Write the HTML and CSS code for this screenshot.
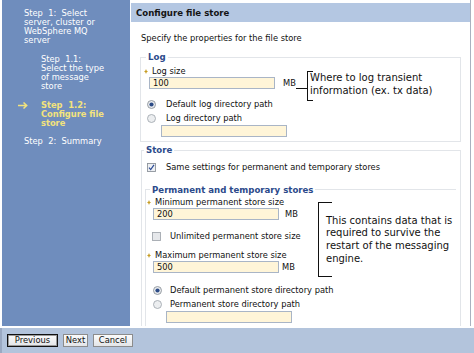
FILE: index.html
```html
<!DOCTYPE html>
<html>
<head>
<meta charset="utf-8">
<title>Configure file store</title>
<link rel="stylesheet" href="styles.css">
</head>
<body>
<div class="app">
  <div class="top">
    <nav class="sidebar">
      <div class="step lvl1">Step&nbsp; 1:&nbsp; Select server, cluster or WebSphere MQ server</div>
      <div class="step lvl2">Step&nbsp; 1.1:&nbsp; Select the type of message store</div>
      <div class="step current">
        <svg class="arrow" width="10" height="9" viewBox="0 0 10 9"><path d="M0 4.5H8.5M5.5 1.5L8.7 4.5L5.5 7.5" fill="none" stroke="#f3e37c" stroke-width="1.5"/></svg>
        <span class="step-text">Step&nbsp; 1.2:&nbsp; Configure file store</span>
      </div>
      <div class="step lvl1">Step&nbsp; 2:&nbsp; Summary</div>
    </nav>
    <main class="panel">
      <div class="header">Configure file store</div>
      <div class="body">
        <p class="desc">Specify the properties for the file store</p>

        <fieldset class="fs fs-log">
          <legend>Log</legend>
          <div class="label"><svg class="req" width="4" height="5" viewBox="0 0 4 5"><path d="M2 0L2.7 1.8L4 2.5L2.7 3.2L2 5L1.3 3.2L0 2.5L1.3 1.8Z" fill="#c69c22"/></svg>Log size</div>
          <div class="field-row"><span class="input">100</span><span class="unit">MB</span></div>
          <div class="opt opt-first">
            <svg class="radio" width="9" height="9" viewBox="0 0 9 9"><circle cx="4.5" cy="4.5" r="4" fill="#e9ebee" stroke="#8d939b" stroke-width="0.9"/><circle cx="4.5" cy="4.5" r="2.1" fill="#2c4b86"/></svg>
            <span>Default log directory path</span>
          </div>
          <div class="opt">
            <svg class="radio" width="9" height="9" viewBox="0 0 9 9"><circle cx="4.5" cy="4.5" r="4" fill="#eceef0" stroke="#a4a9b0" stroke-width="0.9"/></svg>
            <span>Log directory path</span>
          </div>
          <span class="input input-path"></span>
        </fieldset>

        <fieldset class="fs fs-store">
          <legend>Store</legend>
          <div class="opt chk-same">
            <svg class="check" width="9" height="9" viewBox="0 0 9 9"><rect x="0.5" y="0.5" width="8" height="8" fill="#eef0f3" stroke="#8d939b" stroke-width="0.9"/><path d="M2 4.6L3.7 6.6L7 1.8" fill="none" stroke="#2c4b96" stroke-width="1.2"/></svg>
            <span>Same settings for permanent and temporary stores</span>
          </div>

          <fieldset class="fs fs-perm">
            <legend>Permanent and temporary stores</legend>
            <div class="label"><svg class="req" width="4" height="5" viewBox="0 0 4 5"><path d="M2 0L2.7 1.8L4 2.5L2.7 3.2L2 5L1.3 3.2L0 2.5L1.3 1.8Z" fill="#c69c22"/></svg>Minimum permanent store size</div>
            <div class="field-row"><span class="input">200</span><span class="unit">MB</span></div>
            <div class="opt chk-unl">
              <svg class="check" width="9" height="9" viewBox="0 0 9 9"><rect x="0.5" y="0.5" width="8" height="8" fill="#e6e8eb" stroke="#a4a9b0" stroke-width="0.9"/></svg>
              <span>Unlimited permanent store size</span>
            </div>
            <div class="label label-max"><svg class="req" width="4" height="5" viewBox="0 0 4 5"><path d="M2 0L2.7 1.8L4 2.5L2.7 3.2L2 5L1.3 3.2L0 2.5L1.3 1.8Z" fill="#c69c22"/></svg>Maximum permanent store size</div>
            <div class="field-row"><span class="input">500</span><span class="unit unit-max">MB</span></div>
            <div class="opt opt-first opt-perm">
              <svg class="radio" width="9" height="9" viewBox="0 0 9 9"><circle cx="4.5" cy="4.5" r="4" fill="#e9ebee" stroke="#8d939b" stroke-width="0.9"/><circle cx="4.5" cy="4.5" r="2.1" fill="#2c4b86"/></svg>
              <span>Default permanent store directory path</span>
            </div>
            <div class="opt opt-perm">
              <svg class="radio" width="9" height="9" viewBox="0 0 9 9"><circle cx="4.5" cy="4.5" r="4" fill="#eceef0" stroke="#a4a9b0" stroke-width="0.9"/></svg>
              <span>Permanent store directory path</span>
            </div>
            <span class="input input-path input-perm"></span>
          </fieldset>
        </fieldset>
      </div>

      <div class="connector"></div>
      <div class="bracket bracket-log"></div>
      <div class="note note-log">Where to log transient<br>information (ex. tx data)</div>

      <div class="bracket bracket-perm"></div>
      <div class="note note-perm">This contains data that is required to survive the restart of the messaging engine.</div>
    </main>
  </div>
  <footer class="footer">
    <button class="btn btn-default btn-prev">Previous</button>
    <button class="btn btn-next">Next</button>
    <button class="btn btn-cancel">Cancel</button>
  </footer>
</div>
</body>
</html>
```

FILE: styles.css
```css
body {
  margin: 0;
  font-family: "DejaVu Sans", Verdana, sans-serif;
  background: #ffffff;
}

.app {
  width: 474px;
  height: 353px;
  display: flex;
  flex-direction: column;
  overflow: hidden;
}

.top {
  height: 326px;
  display: flex;
  padding-left: 2px;
  flex: none;
}

/* Sidebar */
.sidebar {
  width: 128px;
  flex: none;
  background: #6f8dbd;
  color: #ffffff;
  font-size: 8.3px;
  line-height: 9px;
  padding-top: 8.5px;
  box-sizing: border-box;
}

.step {
  margin-bottom: 10px;
}

.lvl1 {
  padding-left: 22px;
  width: 82px;
}

.lvl2 {
  padding-left: 39px;
  width: 68px;
}

.current {
  display: flex;
  align-items: flex-start;
  padding-left: 3px;
  color: #f3e37c;
  font-weight: bold;
  margin-bottom: 9.6px;
}

.arrow {
  width: 36px;
  flex: none;
  display: block;
}

.step-text {
  width: 68px;
}

/* Main panel */
.panel {
  width: 339px;
  flex: none;
  margin-left: 1px;
  border-right: 1px solid #a9b1c0;
  position: relative;
  overflow: hidden;
  background: #ffffff;
  font-size: 8.3px;
  line-height: 10px;
  color: #111111;
}

.header {
  margin-top: 3px;
  height: 19px;
  background: #b4c7e2;
  font-weight: bold;
  font-size: 8.6px;
  line-height: 20px;
  padding-left: 5px;
  color: #141414;
}

.body {
  padding-left: 9px;
}

.desc {
  margin: 11px 0 0 1px;
}

.fs {
  margin: 0;
  border: 1px solid #e2e5e9;
  box-sizing: border-box;
  min-width: 0;
}

.fs legend {
  font-weight: bold;
  font-size: 8.6px;
  line-height: 10px;
  color: #2b4a8b;
  padding: 0 2px;
}

.fs-log {
  margin-top: 9px;
  width: 321px;
  padding: 4px 0 4px 3px;
}

.fs-log legend {
  margin-left: 2px;
}

.fs-store {
  margin: 3px 0 0 1px;
  width: 320px;
  padding: 5px 0 20px 3px;
}

.fs-store legend {
  margin-left: -1px;
}

.fs-perm {
  margin-top: 10.5px;
  width: 311px;
  border-right: none;
  padding: 2.5px 0 20px 1px;
}

.fs-perm legend {
  margin-left: 3px;
}

.label {
  display: flex;
  align-items: center;
  height: 10px;
}

.req {
  display: block;
  margin-right: 4px;
  flex: none;
}

.label-max {
  margin-top: 7px;
}

.field-row {
  display: flex;
  align-items: center;
  margin-top: 1px;
  padding-left: 5px;
}

.fs-perm .field-row {
  padding-left: 6px;
}

.input {
  display: block;
  width: 126px;
  height: 12px;
  box-sizing: border-box;
  border: 1px solid #a9b5c6;
  background: #fff5d8;
  padding-left: 3px;
  line-height: 10px;
  flex: none;
}

.unit {
  margin-left: 8px;
}

.fs-perm .unit {
  margin-left: 6px;
}

.fs-perm .unit-max {
  margin-left: 3px;
}

.opt {
  display: flex;
  align-items: center;
  height: 14px;
}

.opt svg {
  display: block;
  flex: none;
}

.fs-log .opt-first {
  margin-top: 8px;
}

.fs-log .radio {
  margin-left: 3px;
  margin-right: 10px;
}

.input-path {
  margin-left: 17px;
}

.chk-same .check {
  margin-left: 2px;
  margin-right: 10px;
}

.chk-unl {
  margin-top: 9px;
}

.chk-unl .check {
  margin-left: 5px;
  margin-right: 9px;
}

.opt-perm .radio {
  margin-left: 6px;
  margin-right: 8px;
}

.fs-perm .opt-first {
  margin-top: 10px;
}

.input-perm {
  margin-left: 19px;
}

/* Annotations over the form */
.connector {
  position: absolute;
  left: 165px;
  top: 88px;
  width: 11px;
  height: 1px;
  background: #111111;
}

.bracket {
  position: absolute;
  border: 1px solid #111111;
  border-right: none;
  box-sizing: border-box;
}

.bracket-log {
  left: 176px;
  top: 71px;
  width: 6px;
  height: 30px;
}

.bracket-perm {
  left: 187px;
  top: 202px;
  width: 14px;
  height: 75px;
}

.note {
  position: absolute;
  font-size: 10px;
  color: #111111;
}

.note-log {
  left: 179px;
  top: 71px;
  line-height: 13px;
}

.note-perm {
  left: 195px;
  top: 214.5px;
  width: 132px;
  line-height: 12.7px;
}

/* Footer */
.footer {
  margin-top: 2px;
  height: 22px;
  flex: none;
  background: #b3c4dc;
  border-bottom: 3px solid #8f9fb8;
  border-left: 2px solid #9aa9c2;
  display: flex;
  align-items: flex-start;
  gap: 5px;
  padding: 6px 0 0 5px;
  box-sizing: content-box;
}

.btn {
  height: 13px;
  box-sizing: border-box;
  font-family: "DejaVu Sans", Verdana, sans-serif;
  font-size: 8.4px;
  line-height: 11px;
  border: 1px solid #8c8c8c;
  background: linear-gradient(#fbfbfb, #e3e5e8);
  padding: 0;
  color: #111111;
  margin: 0;
}

.btn-default {
  border: 1px solid #111111;
  box-shadow: inset 0 0 0 1px #9a9a9a;
}

.btn-prev {
  width: 51px;
}

.btn-next {
  width: 25px;
}

.btn-cancel {
  width: 40px;
}
```
